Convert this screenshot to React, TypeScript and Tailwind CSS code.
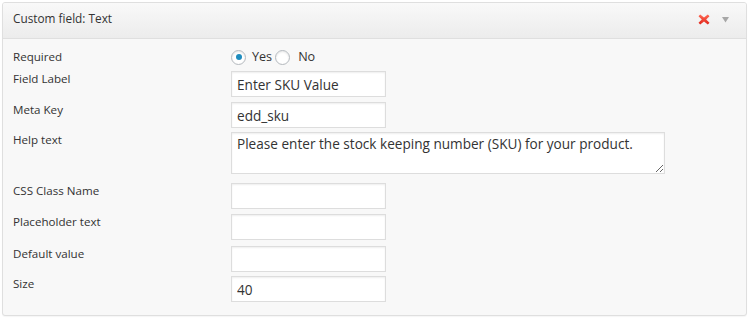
import React from "react";

const inputCls =
  "block h-[26px] w-[155px] border border-[#dddddd] bg-white px-[5px] text-[13.6px] text-[#333] shadow-[inset_0_1px_2px_rgba(0,0,0,0.07)] outline-none";

function Label({ children }: { children: React.ReactNode }) {
  return <div className="pt-[1px] text-[11.6px] leading-[14px] text-[#333]">{children}</div>;
}

function Row({
  label,
  children,
  mb,
}: {
  label: string;
  children: React.ReactNode;
  mb: string;
}) {
  return (
    <div className={`grid grid-cols-[218px_1fr] items-start ${mb}`}>
      <Label>{label}</Label>
      <div>{children}</div>
    </div>
  );
}

function Radio({ checked }: { checked?: boolean }) {
  return (
    <span className="flex h-[15px] w-[15px] items-center justify-center rounded-full border border-[#b4b9be] bg-white shadow-[inset_0_1px_2px_rgba(0,0,0,0.1)]">
      {checked && <span className="h-[6px] w-[6px] rounded-full bg-[#1e8cbe]" />}
    </span>
  );
}

export default function App() {
  return (
    <div className="bg-white p-[2px] font-['Open_Sans',sans-serif]">
      <div className="w-[745px] overflow-hidden rounded-[3px] border border-[#dfdfdf] bg-[#f8f8f8] shadow-[0_1px_1px_rgba(0,0,0,0.04)]">
        <div className="flex h-[36px] items-center justify-between border-b border-[#dfdfdf] bg-gradient-to-b from-[#f9f9f9] to-[#ececec] pb-[3px] pl-[10px] pr-[17px]">
          <span className="text-[11.8px] text-[#333]">Custom field: Text</span>
          <div className="flex items-center gap-[12px]">
            <svg width="12" height="11" viewBox="0 0 12 11">
              <defs>
                <linearGradient id="xg" x1="0" y1="0" x2="0" y2="1">
                  <stop offset="0" stopColor="#ff6a55" />
                  <stop offset="1" stopColor="#e0261b" />
                </linearGradient>
              </defs>
              <path
                d="M2.2 0.5 L6 3.6 L9.8 0.5 L11.5 2.2 L8.2 5.5 L11.5 8.8 L9.8 10.5 L6 7.4 L2.2 10.5 L0.5 8.8 L3.8 5.5 L0.5 2.2 Z"
                fill="url(#xg)"
              />
            </svg>
            <svg width="7" height="6" viewBox="0 0 7 6" className="mt-[1px]">
              <path d="M0 0 H7 L3.5 5.5 Z" fill="#a7a7a7" />
            </svg>
          </div>
        </div>
        <div className="px-[10px] pb-[13px] pt-[10px]">
          <Row label="Required" mb="mb-[6px]">
            <div className="flex h-[16px] items-center text-[12.6px] text-[#333]">
              <Radio checked />
              <span className="ml-[6px]">Yes</span>
              <span className="ml-[3px]">
                <Radio />
              </span>
              <span className="ml-[8px]">No</span>
            </div>
          </Row>
          <Row label="Field Label" mb="mb-[5px]">
            <input className={inputCls} defaultValue="Enter SKU Value" />
          </Row>
          <Row label="Meta Key" mb="mb-[4px]">
            <input className={inputCls} defaultValue="edd_sku" />
          </Row>
          <Row label="Help text" mb="mb-[9px]">
            <textarea
              className="block h-[42px] w-[434px] border border-[#dddddd] bg-white px-[5px] pt-[2px] text-[13.6px] leading-[18px] text-[#333] shadow-[inset_0_1px_2px_rgba(0,0,0,0.07)] outline-none"
              defaultValue="Please enter the stock keeping number (SKU) for your product."
            />
          </Row>
          <Row label="CSS Class Name" mb="mb-[5px]">
            <input className={inputCls} defaultValue="" />
          </Row>
          <Row label="Placeholder text" mb="mb-[6px]">
            <input className={inputCls} defaultValue="" />
          </Row>
          <Row label="Default value" mb="mb-[4px]">
            <input className={inputCls} defaultValue="" />
          </Row>
          <Row label="Size" mb="mb-0">
            <input className={inputCls} defaultValue="40" />
          </Row>
        </div>
      </div>
    </div>
  );
}
